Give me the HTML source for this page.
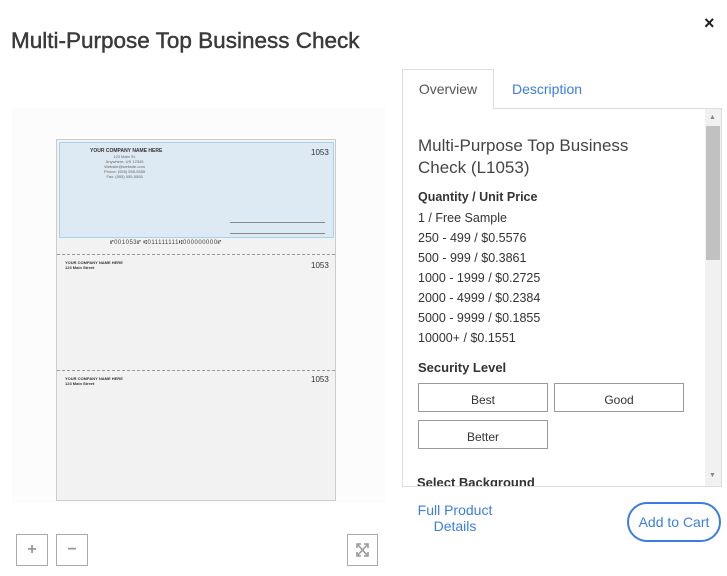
<!DOCTYPE html>
<html><head><style>
*{box-sizing:border-box;margin:0;padding:0}
body{width:727px;height:567px;background:#fff;font-family:"Liberation Sans",sans-serif;color:#333;position:relative;overflow:hidden}
.a{position:absolute}
.btn{position:absolute;border:1px solid #aaa;background:#fff;color:#999;font-size:16px;font-weight:bold;text-align:center;line-height:30px}
.sec{position:absolute;border:1px solid #999;font-size:12px;text-align:center;line-height:32px;color:#333}
.l{position:absolute;left:418px;font-size:12.5px;color:#333}
</style></head><body>
<div class="a" style="left:11px;top:28px;font-size:22.5px;color:#3a3a3a;-webkit-text-stroke:0.45px #3a3a3a">Multi-Purpose Top Business Check</div>
<div class="a" style="left:704px;top:13px;font-size:18px;font-weight:bold;color:#222">×</div>

<div class="a" style="left:12px;top:108px;width:373px;height:395px;background:#fcfcfc"></div>
<div class="a" style="left:56px;top:139px;width:280px;height:362px;background:#f2f2f2;border:1px solid #ccc"></div>
<div class="a" style="left:59px;top:142px;width:275px;height:96px;background:#dde9f3;border:1px solid #a8d2ea"></div>
<div class="a" style="left:90px;top:148px;font-size:5px;font-weight:bold">YOUR COMPANY NAME HERE</div>
<div class="a" style="left:104px;top:154px;font-size:4px;color:#666;line-height:5px;text-align:center">123 Main St.<br>Anywhere, US 12345<br>Website@website.com<br>Phone: (555) 555-5555<br>Fax: (555) 555-5555</div>
<div class="a" style="left:311px;top:148px;font-size:8px">1053</div>
<div class="a" style="left:230px;top:222px;width:95px;height:1px;background:#888"></div>
<div class="a" style="left:230px;top:233px;width:95px;height:1px;background:#888"></div>
<div class="a" style="left:110px;top:240px;font-size:6px;letter-spacing:0.5px;color:#444">⑈001053⑈ ⑆011111111⑆000000000⑈</div>
<div class="a" style="left:57px;top:254px;width:278px;border-top:1px dashed #999"></div>
<div class="a" style="left:65px;top:260px;font-size:4px;font-weight:bold">YOUR COMPANY NAME HERE<br>123 Main Street</div>
<div class="a" style="left:311px;top:261px;font-size:8px">1053</div>
<div class="a" style="left:57px;top:370px;width:278px;border-top:1px dashed #999"></div>
<div class="a" style="left:65px;top:376px;font-size:4px;font-weight:bold">YOUR COMPANY NAME HERE<br>123 Main Street</div>
<div class="a" style="left:311px;top:375px;font-size:8px">1053</div>

<div class="btn" style="left:16px;top:534px;width:32px;height:32px">+</div>
<div class="btn" style="left:56px;top:534px;width:32px;height:32px">−</div>
<div class="btn" style="left:347px;top:534px;width:31px;height:32px"><svg width="29" height="30" viewBox="0 0 29 30"><g stroke="#999" stroke-width="1.6" fill="none"><path d="M10 10l9 10M19 10l-9 10"/><path d="M9 13V9h4M20 13V9h-4M9 17v4h4M20 17v4h-4"/></g></svg></div>

<div class="a" style="left:402px;top:108px;width:320px;height:379px;border:1px solid #ddd"></div>
<div class="a" style="left:402px;top:69px;width:92px;height:40px;border:1px solid #ddd;border-bottom:none;background:#fff;font-size:14px;color:#555;line-height:38px;text-align:center">Overview</div>
<div class="a" style="left:512px;top:81px;font-size:14px;color:#3b7de0">Description</div>
<div class="a" style="left:705px;top:109px;width:16px;height:377px;background:#f1f1f1"></div>
<div class="a" style="left:706px;top:126px;width:14px;height:134px;background:#c1c1c1"></div>
<div class="a" style="left:709px;top:114px;font-size:7px;color:#888">▲</div>
<div class="a" style="left:709px;top:472px;font-size:7px;color:#888">▼</div>

<div class="a" style="left:418px;top:135px;font-size:17px;line-height:22px;color:#444">Multi-Purpose Top Business<br>Check (L1053)</div>
<div class="l" style="top:190px;font-weight:bold">Quantity / Unit Price</div>
<div class="l" style="top:208px;line-height:20px">1 / Free Sample<br>250 - 499 / $0.5576<br>500 - 999 / $0.3861<br>1000 - 1999 / $0.2725<br>2000 - 4999 / $0.2384<br>5000 - 9999 / $0.1855<br>10000+ / $0.1551</div>
<div class="l" style="top:360px;font-weight:bold;font-size:13px">Security Level</div>
<div class="sec" style="left:418px;top:383px;width:130px;height:29px">Best</div>
<div class="sec" style="left:554px;top:383px;width:130px;height:29px">Good</div>
<div class="sec" style="left:418px;top:420px;width:130px;height:29px">Better</div>
<div class="a" style="left:403px;top:473px;width:301px;height:13px;overflow:hidden"><div style="position:absolute;left:14px;top:2px;font-size:13px;font-weight:bold">Select Background</div></div>

<div class="a" style="left:405px;top:502px;width:100px;text-align:center;font-size:14px;line-height:16px;color:#3b7de0">Full Product<br>Details</div>
<div class="a" style="left:627px;top:502px;width:94px;height:40px;border:2px solid #3b7de0;border-radius:20px;color:#3b7de0;font-size:14px;text-align:center;line-height:36px">Add to Cart</div>
</body></html>
